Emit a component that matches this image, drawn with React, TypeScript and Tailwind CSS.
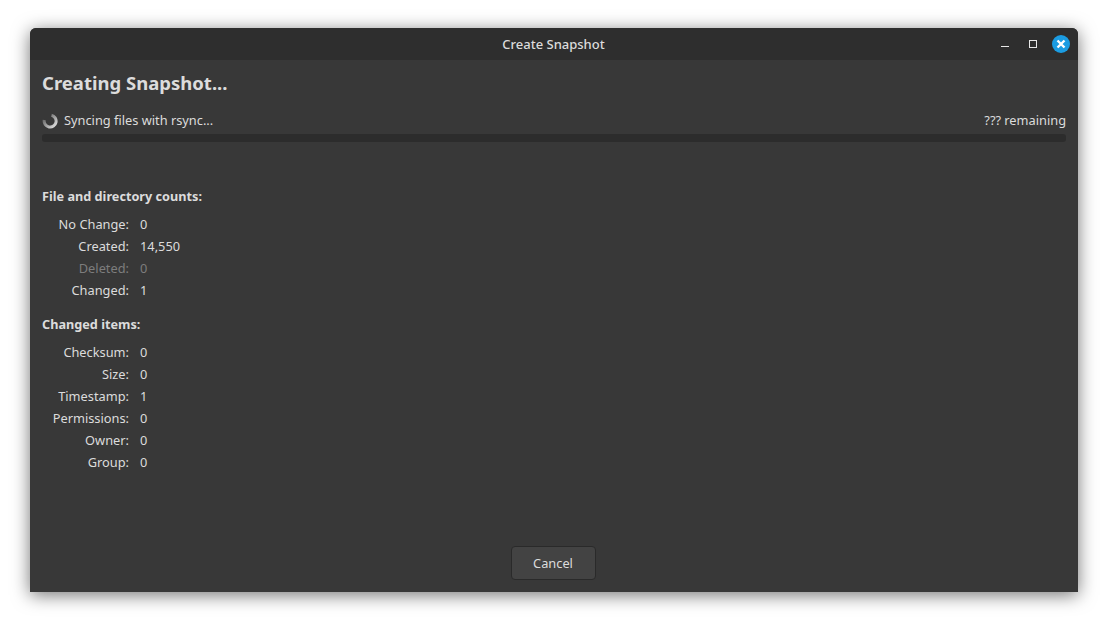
const font = { fontFamily: '"Noto Sans", sans-serif' };

function Stat({ label, value, dim }: { label: string; value: string; dim?: boolean }) {
  return (
    <div className={`flex h-[22px] items-center text-[12.8px] ${dim ? "text-[#7d7d7d]" : "text-[#dcdcdc]"}`}>
      <span className="w-[87px] text-right">{label}</span>
      <span className="ml-[11px]">{value}</span>
    </div>
  );
}

export default function App() {
  return (
    <div className="h-[624px] w-[1108px] overflow-hidden bg-white pl-[30px] pt-[28px] font-['Noto_Sans',sans-serif]" style={font}>
      <div className="flex h-[564px] w-[1048px] flex-col overflow-hidden rounded-t-[6px] bg-[#383838] shadow-[0_3px_18px_rgba(0,0,0,0.55)]">
        <header className="relative flex h-8 shrink-0 items-center justify-center bg-[#2e2e2e] pt-[2px] pr-[1px]">
          <span className="text-[13px] font-medium text-[#dcdcdc]">Create Snapshot</span>
          <div className="absolute right-[8px] top-0 flex h-8 items-center">
            <svg width="10" height="10" viewBox="0 0 10 10" className="mr-[19px]">
              <rect x="1" y="7" width="8" height="1" fill="#e8e8e8" />
            </svg>
            <svg width="10" height="10" viewBox="0 0 10 10" className="mr-[13px]">
              <rect x="0.5" y="1.5" width="7" height="7" fill="none" stroke="#e8e8e8" />
            </svg>
            <svg width="18" height="18" viewBox="0 0 18 18">
              <circle cx="9" cy="9" r="9" fill="#1b9ce2" />
              <path d="M5.5 5.5 L12.5 12.5 M12.5 5.5 L5.5 12.5" stroke="#fff" strokeWidth="2.4" />
            </svg>
          </div>
        </header>

        <main className="flex flex-1 flex-col px-3">
          <h1 className="mt-[8px] h-[30px] text-[18.5px] font-bold leading-[30px] text-[#dcdcdc]">Creating Snapshot...</h1>
          <div className="mt-[12px] flex h-[22px] items-center text-[12.8px] text-[#dcdcdc]">
            <svg width="16" height="16" viewBox="0 0 16 16" className="mr-[6px]">
              <defs>
                <linearGradient id="sp" x1="0" y1="0" x2="1" y2="1">
                  <stop offset="0" stopColor="#555" />
                  <stop offset="1" stopColor="#e4e4e4" />
                </linearGradient>
              </defs>
              <path d="M9.5 2.2 A6 6 0 1 1 2.2 7" fill="none" stroke="url(#sp)" strokeWidth="3" />
            </svg>
            <span>Syncing files with rsync...</span>
            <span className="ml-auto">??? remaining</span>
          </div>
          <div className="mt-[2px] h-[8px] rounded-[3px] bg-[#2c2c2c]" />

          <h2 className="mt-[44px] h-[20px] text-[12.7px] font-bold leading-[20px] text-[#dcdcdc]">File and directory counts:</h2>
          <div className="mt-[8px] flex flex-col">
            <Stat label="No Change:" value="0" />
            <Stat label="Created:" value="14,550" />
            <Stat label="Deleted:" value="0" dim />
            <Stat label="Changed:" value="1" />
          </div>

          <h2 className="mt-[12px] h-[20px] text-[12.7px] font-bold leading-[20px] text-[#dcdcdc]">Changed items:</h2>
          <div className="mt-[8px] flex flex-col">
            <Stat label="Checksum:" value="0" />
            <Stat label="Size:" value="0" />
            <Stat label="Timestamp:" value="1" />
            <Stat label="Permissions:" value="0" />
            <Stat label="Owner:" value="0" />
            <Stat label="Group:" value="0" />
          </div>

          <div className="mt-auto mb-3 flex justify-center pr-[2px]">
            <button className="h-[34px] w-[85px] rounded-[4px] border border-[#2a2a2a] bg-[#434343] pt-[1px] text-[12.8px] text-[#dcdcdc]">Cancel</button>
          </div>
        </main>
      </div>
    </div>
  );
}
